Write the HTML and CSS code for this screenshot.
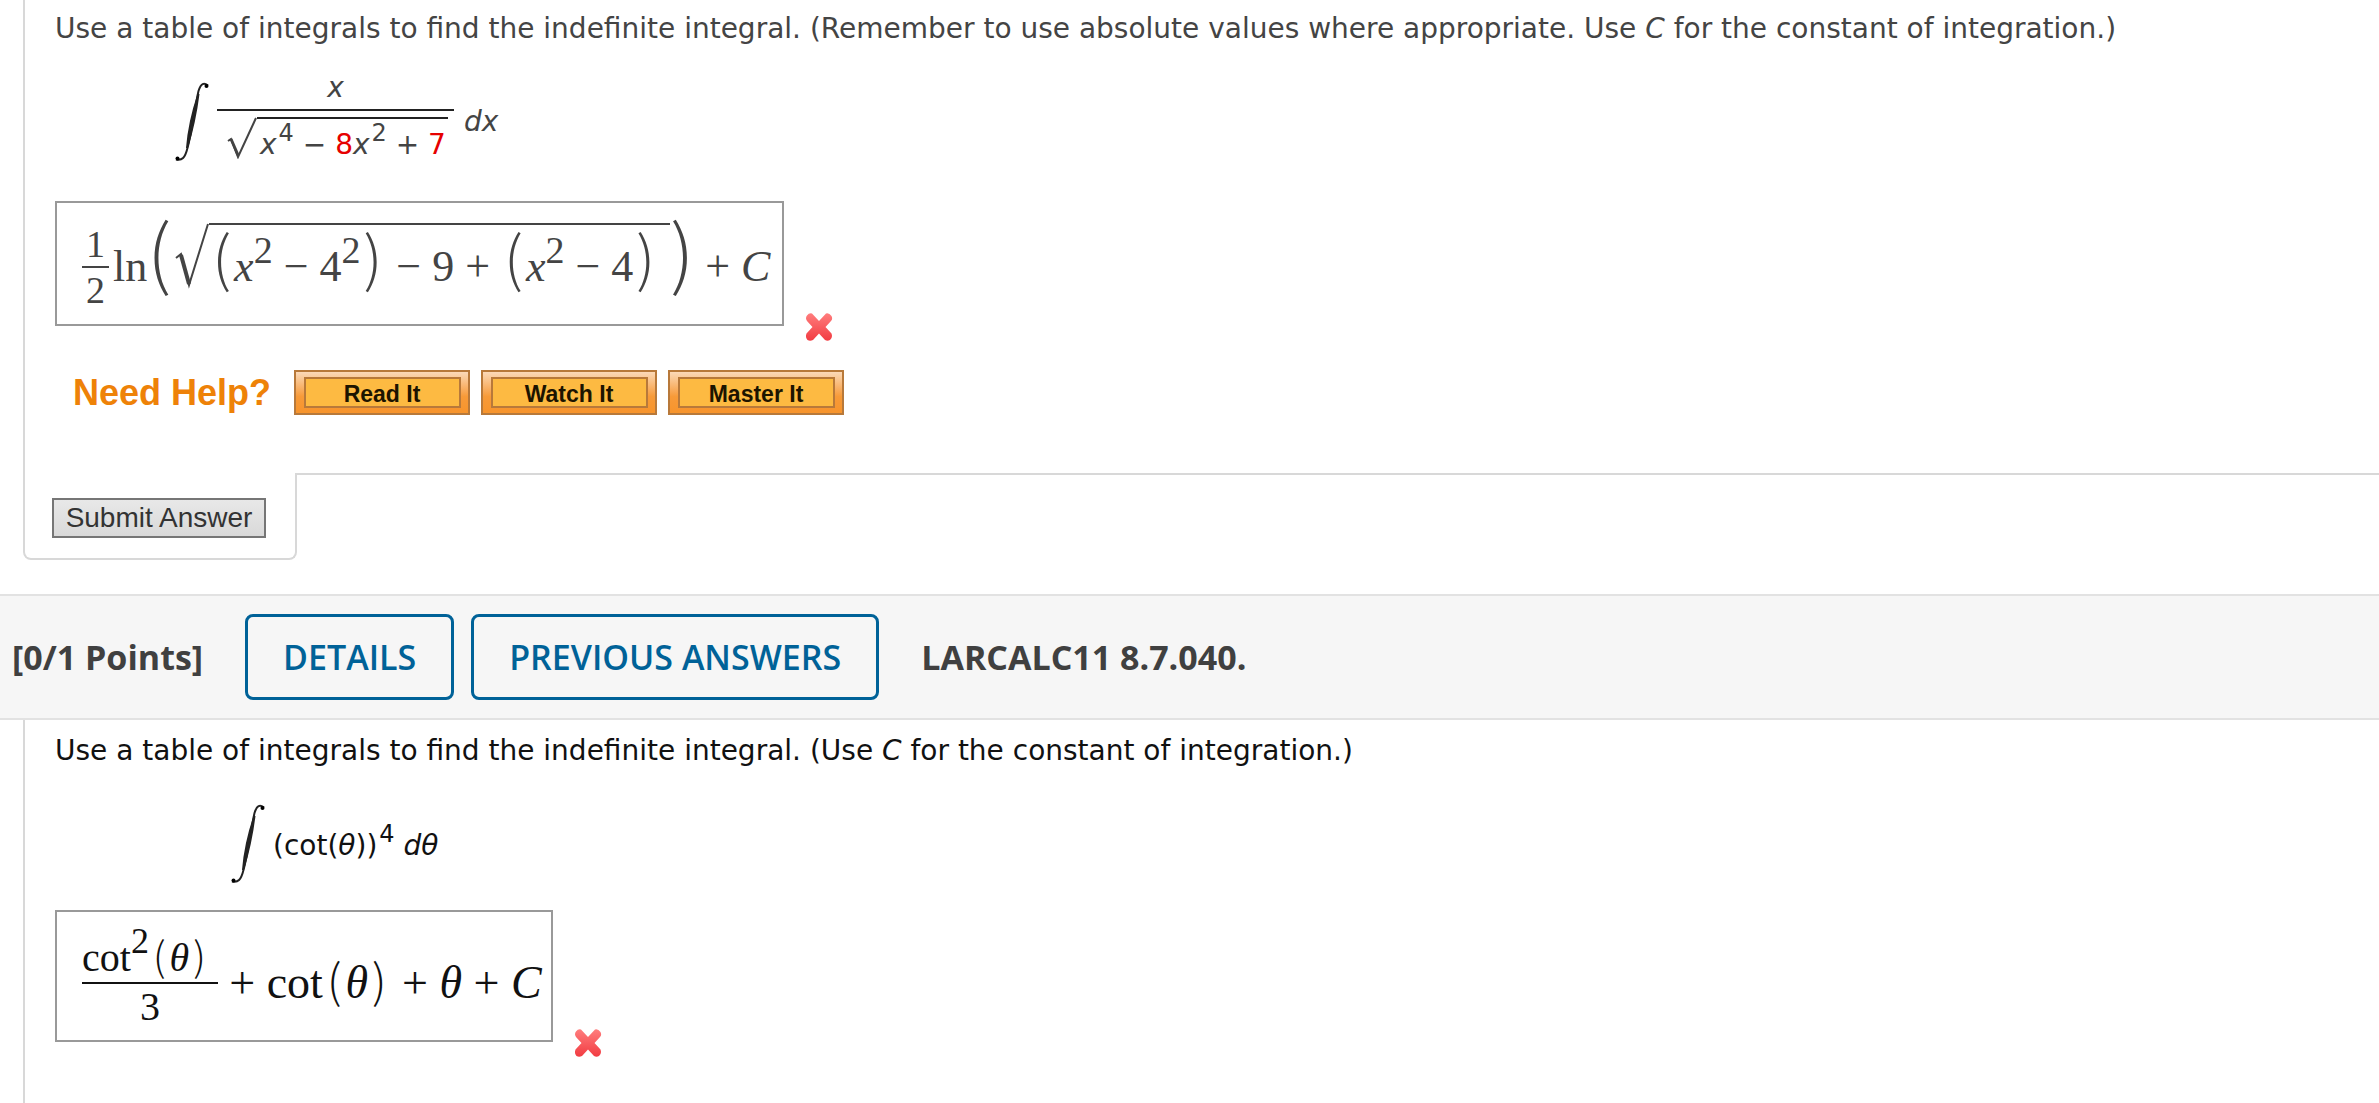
FILE: index.html
```html
<!DOCTYPE html>
<html lang="en">
<head>
<meta charset="utf-8">
<title>LARCALC11 8.7 – Integration by Tables</title>
<link rel="stylesheet" href="styles.css">
</head>
<body>
<svg width="0" height="0" class="defs" aria-hidden="true">
  <defs>
    <linearGradient id="wrong-fill" x1="0" y1="0" x2="0" y2="1">
      <stop offset="0" stop-color="#ff7d7d"/>
      <stop offset="1" stop-color="#f23c42"/>
    </linearGradient>
    <symbol id="wrong" viewBox="0 0 28 30">
      <path d="M7 1.500 14 9 21 1.500Q24 .5 26.500 4 28 7 26 9L20.500 15 26.500 21.500Q28 25 25 28 22.500 29.500 20 28L14 21.500 8 28Q5 29.500 2.500 28 0 25 1.500 21.500L7.500 15 2 9Q0 6 2 3.500 4 .8 7 1.500Z" fill="url(#wrong-fill)"/>
    </symbol>
    <symbol id="integral" viewBox="0 0 34 80">
      <path d="M33 3.500C29 .5 26 1 23.500 9C20 24 17 49 12.500 66C10 76 7 79 1 77.500" fill="none" stroke="currentColor" stroke-width="2"/>
      <path d="M23.500 12Q14 40 12 66Q20 40 23.500 12Z" fill="currentColor" stroke="currentColor" stroke-width="2"/>
      <circle cx="31.500" cy="4" r="2"/><circle cx="2.500" cy="76.500" r="2"/>
    </symbol>
  </defs>
</svg>

<main>
  <section class="question question--muted">
    <div class="question__body">
      <p class="prompt">Use a table of integrals to find the indefinite integral. (Remember to use absolute values where appropriate. Use <i>C</i> for the constant of integration.)</p>

      <div class="integral integral--fraction">
        <svg class="integral__sign" role="img" aria-label="integral"><use href="#integral"/></svg>
        <div class="quotient">
          <div class="quotient__top"><i>x</i></div>
          <div class="quotient__bottom">
            <svg class="root-sign" viewBox="0 0 30 42" aria-hidden="true"><path d="M1 24 4 22 11 40 29 1" fill="none" stroke="currentColor" stroke-width="2"/><path d="M4 22 11 38" stroke="currentColor" stroke-width="3"/></svg>
            <span class="root-body"><i>x</i><sup>4</sup> − <span class="varied">8</span><i>x</i><sup>2</sup> + <span class="varied">7</span></span>
          </div>
        </div>
        <i>dx</i>
      </div>

      <div class="response">
        <div class="answer answer--root"><span class="frac frac--small"><span class="frac__top">1</span><span class="frac__bottom">2</span></span><span class="fn">ln</span><span class="paren paren--xl">(</span><span class="radical"><svg class="radical__sign" viewBox="0 0 34 66" aria-hidden="true"><path d="M1 35 6 31 14 62 33 1" fill="none" stroke="currentColor" stroke-width="2"/><path d="M6 32 14 61" stroke="currentColor" stroke-width="4"/></svg><span class="radical__body"><span class="paren paren--l">(</span><i>x</i><sup>2</sup> − 4<sup>2</sup><span class="paren paren--l">)</span> − 9 + <span class="paren paren--l">(</span><i>x</i><sup>2</sup> − 4<span class="paren paren--l">)</span></span></span><span class="paren paren--xl">)</span> + <i>C</i></div>
        <svg class="mark" role="img" aria-label="Incorrect"><use href="#wrong"/></svg>
      </div>

      <div class="help">
        <span class="help__label">Need Help?</span>
        <button type="button" class="help__button">Read It</button>
        <button type="button" class="help__button">Watch It</button>
        <button type="button" class="help__button">Master It</button>
      </div>
    </div>
    <div class="question__foot">
      <div class="submit-tab"><button type="submit" class="submit">Submit Answer</button></div>
      <div class="question__rule"></div>
    </div>
  </section>

  <header class="bar">
    <span class="bar__points">[0/1 Points]</span>
    <button type="button" class="bar__button">DETAILS</button>
    <button type="button" class="bar__button">PREVIOUS ANSWERS</button>
    <h2 class="bar__title">LARCALC11 8.7.040.</h2>
  </header>

  <section class="question">
    <div class="question__body question__body--last">
      <p class="prompt">Use a table of integrals to find the indefinite integral. (Use <i>C</i> for the constant of integration.)</p>

      <div class="integral integral--plain">
        <svg class="integral__sign" role="img" aria-label="integral"><use href="#integral"/></svg>
        <span class="integral__term">(cot(<i>θ</i>))<sup>4</sup> <i>dθ</i></span>
      </div>

      <div class="response">
        <div class="answer answer--cot"><span class="frac"><span class="frac__top">cot<sup>2</sup><span class="paren paren--s">(</span><i>θ</i><span class="paren paren--s">)</span></span><span class="frac__bottom">3</span></span> + cot<span class="paren paren--m">(</span><i>θ</i><span class="paren paren--m">)</span> + <i>θ</i> + <i>C</i></div>
        <svg class="mark" role="img" aria-label="Incorrect"><use href="#wrong"/></svg>
      </div>
    </div>
  </section>
</main>
</body>
</html>
```
FILE: styles.css
```css
* { box-sizing: border-box; }

body {
  margin: 0;
  background: #fff;
  color: #111;
  font: 28px/36px Verdana, "DejaVu Sans", sans-serif;
}

button { margin: 0; cursor: pointer; }
.defs { position: absolute; }

/* Question panels */
.question--muted { color: #444; padding-bottom: 34px; }

.question__body {
  margin-left: 23px;
  padding: 11px 0 58px 30px;
  border-left: 2px solid #d8d8d8;
}
.question__body--last { padding: 13px 0 45px 30px; }

.question__foot { display: flex; margin-left: 23px; }
.question__rule { flex: 1; border-top: 2px solid #d8d8d8; }

.submit-tab {
  padding: 25px 29px 20px 27px;
  border: 2px solid #d8d8d8;
  border-top: 0;
  border-radius: 0 0 8px 8px;
}
.submit {
  display: block;
  width: 214px;
  height: 40px;
  padding: 0;
  border: 2px solid #767676;
  background: linear-gradient(#e8e8e8, #d9d9d9);
  color: #333;
  font: 28px/34px "Liberation Sans", Arial, sans-serif;
}

.prompt { margin: 0; }

/* Typeset integrals */
.integral { display: flex; align-items: center; }
.integral--fraction { gap: 8px; margin: 25px 0 30px 120px; }
.integral--plain { gap: 8px; margin: 35px 0 26px 176px; }
.integral__sign { width: 34px; height: 80px; color: #222; }
.integral__term { padding-top: 4px; }
.integral sup { margin-left: 2px; font-size: 24px; line-height: 0; vertical-align: 13px; }

.quotient { display: flex; flex-direction: column; padding-bottom: 8px; margin-right: 2px; }
.quotient__top {
  padding-bottom: 5px;
  border-bottom: 2px solid #222;
  line-height: 32px;
  text-align: center;
}
.quotient__bottom { display: flex; padding: 6px 6px 0 10px; }
.root-sign { width: 30px; height: 42px; }
.root-body { padding: 8px 2px 0 3px; border-top: 2px solid #222; }
.varied { color: #e60000; }

/* Student answers */
.response { display: flex; align-items: flex-end; gap: 21px; }
.answer {
  margin-bottom: 16px;
  padding: 0 12px 0 25px;
  border: 2px solid #999;
  font: 44px/48px "Liberation Serif", "Times New Roman", serif;
  white-space: nowrap;
}
.answer--root { height: 125px; padding-top: 19px; }
.answer--cot { height: 132px; padding-top: 22px; padding-right: 9px; font-size: 46px; }
.answer sup { font-size: 38px; line-height: 0; vertical-align: 18px; }
.mark { width: 28px; height: 30px; }

.paren { font-family: "Noto Sans CJK SC", sans-serif; font-weight: 300; line-height: 0; }
.paren--s { padding: 0 4px; font-size: 40px; }
.paren--m { padding: 0 4px; font-size: 46px; }
.paren--l { padding: 0 3px; font-size: 60px; }
.paren--xl { font-size: 76px; }

.frac { display: inline-flex; flex-direction: column; vertical-align: 27px; font-size: 40px; text-align: center; }
.frac__top { padding: 0 8px 0 0; border-bottom: 2px solid currentColor; line-height: 48px; }
.frac__bottom { line-height: 46px; }
.frac .frac__top sup { font-size: 36px; }
.frac--small { font-size: 38px; vertical-align: 24px; }
.frac--small .frac__top { padding: 0 4px; line-height: 44px; }
.frac--small .frac__bottom { line-height: 44px; }
.fn { margin-left: 4px; }

.radical { display: inline-flex; padding-left: 4px; }
.radical__sign { width: 34px; height: 66px; }
.radical__body { align-self: baseline; padding: 18px 12px 0 0; border-top: 2px solid currentColor; }

/* Help links */
.help { display: flex; align-items: center; gap: 11px; margin-top: 28px; padding-left: 18px; }
.help__label {
  width: 210px;
  color: #ee8208;
  font: bold 36px/45px "Liberation Sans", Arial, sans-serif;
}
.help__button {
  width: 176px;
  height: 45px;
  padding: 6px 7px 4px;
  border: 2px solid #b8793a;
  background:
    linear-gradient(#fdba42, #fdba42) center / 153px 27px no-repeat,
    linear-gradient(#b8793a, #b8793a) center / 157px 31px no-repeat,
    linear-gradient(#fbd9b8, #f79a38 60%, #f7942c);
  color: #1c1400;
  font: bold 23px/30px "Liberation Sans", Arial, sans-serif;
}

/* Question header bar */
.bar {
  display: flex;
  align-items: center;
  padding: 18px 12px;
  border: solid #e2e2e2;
  border-width: 2px 0;
  background: #f6f6f6;
  color: #404040;
  font: bold 34px/48px "Open Sans", sans-serif;
}
.bar__points { margin-right: 42px; }
.bar__button {
  height: 86px;
  margin-right: 17px;
  padding: 0 35px;
  border: 3px solid #006298;
  border-radius: 8px;
  background: transparent;
  color: #006298;
  font: 600 34px/48px "Open Sans", sans-serif;
}
.bar__title { margin: 0 0 0 25px; font-size: 34px; line-height: 48px; }
```
